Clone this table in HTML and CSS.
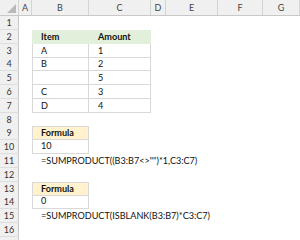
FILE: index.html
```html
<!DOCTYPE html>
<html lang="en">
<head>
    <meta charset="UTF-8">
    <title>SUMPRODUCT non-blank</title>
    <link rel="stylesheet" href="styles.css">
</head>
<body>
<div class="sheet">
    <div class="hdr">
        <div class="corner"><span class="tri"></span></div>
        <div>A</div><div>B</div><div>C</div><div>D</div><div>E</div><div>F</div><div>G</div>
    </div>
    <div class="row"><div class="num">1</div></div>
    <div class="row"><div class="num">2</div><div></div><div class="cell th">Item</div><div class="cell th">Amount</div></div>
    <div class="row"><div class="num">3</div><div></div><div class="cell td l">A</div><div class="cell td r">1</div></div>
    <div class="row"><div class="num">4</div><div></div><div class="cell td l">B</div><div class="cell td r">2</div></div>
    <div class="row"><div class="num">5</div><div></div><div class="cell td l"></div><div class="cell td r">5</div></div>
    <div class="row"><div class="num">6</div><div></div><div class="cell td l">C</div><div class="cell td r">3</div></div>
    <div class="row"><div class="num">7</div><div></div><div class="cell td l">D</div><div class="cell td r">4</div></div>
    <div class="row"><div class="num">8</div></div>
    <div class="row"><div class="num">9</div><div></div><div class="cell fh">Formula</div></div>
    <div class="row"><div class="num">10</div><div></div><div class="cell fv">10</div></div>
    <div class="row"><div class="num">11</div><div></div><div class="cell long">=SUMPRODUCT((B3:B7&lt;&gt;"")*1,C3:C7)</div></div>
    <div class="row"><div class="num">12</div></div>
    <div class="row"><div class="num">13</div><div></div><div class="cell fh">Formula</div></div>
    <div class="row"><div class="num">14</div><div></div><div class="cell fv">0</div></div>
    <div class="row"><div class="num">15</div><div></div><div class="cell long">=SUMPRODUCT(ISBLANK(B3:B7)*C3:C7)</div></div>
    <div class="row"><div class="num">16</div></div>
    <div class="row"><div class="num"></div></div>
</div>
</body>
</html>
```

FILE: styles.css
```css
*{
    margin: 0;
    padding: 0;
    box-sizing: border-box;
}
body{
    background: #fff;
    font-family: Lato, "Liberation Sans", sans-serif;
    font-size: 9.1px;
    color: #111;
}
.sheet{
    width: 300px;
    height: 240px;
    overflow: hidden;
}
.hdr,.row{
    display: grid;
    grid-template-columns: 19px 13px 57px 62px 15px 52px 45px 1fr;
}
/* column letters */
.hdr{
    height: 16px;
    background: #f0f0f0;
    border-bottom: 1px solid #c8c8c8;
    color: #444;
}
.hdr div{
    border-right: 1px solid #d4d4d4;
    text-align: center;
    line-height: 15px;
    font-size: 9px;
}
.hdr .corner{
    position: relative;
}
.corner .tri{
    position: absolute;
    right: 2px;
    bottom: 2px;
    width: 0;
    height: 0;
    border-left: 9px solid transparent;
    border-bottom: 9px solid #b9b9b9;
}
.row{
    height: 13.8px;
}
/* row numbers */
.num{
    background: #f0f0f0;
    border-right: 1px solid #c8c8c8;
    border-bottom: 1px solid #dedede;
    text-align: center;
    color: #333;
    font-size: 9px;
    line-height: 13px;
}
.cell{
    padding-left: 9px;
    line-height: 13px;
    white-space: nowrap;
}
.th{
    background: #e2efda;
    font-weight: bold;
}
.td{
    border-bottom: 1px solid #d9d9d9;
}
.td.l{
    border-left: 1px solid #d9d9d9;
    border-right: 1px solid #d9d9d9;
    padding-left: 8px;
}
.td.r{
    border-right: 1px solid #d9d9d9;
}
.fh,.fv{
    border: 1px solid #d9d9d9;
    border-top: none;
    padding-left: 8px;
    line-height: 12px;
}
.fh{
    background: #fff2cc;
    font-weight: bold;
    border-top: 1px solid #d9d9d9;
}
.long{
    grid-column: 3 / -1;
}
```
